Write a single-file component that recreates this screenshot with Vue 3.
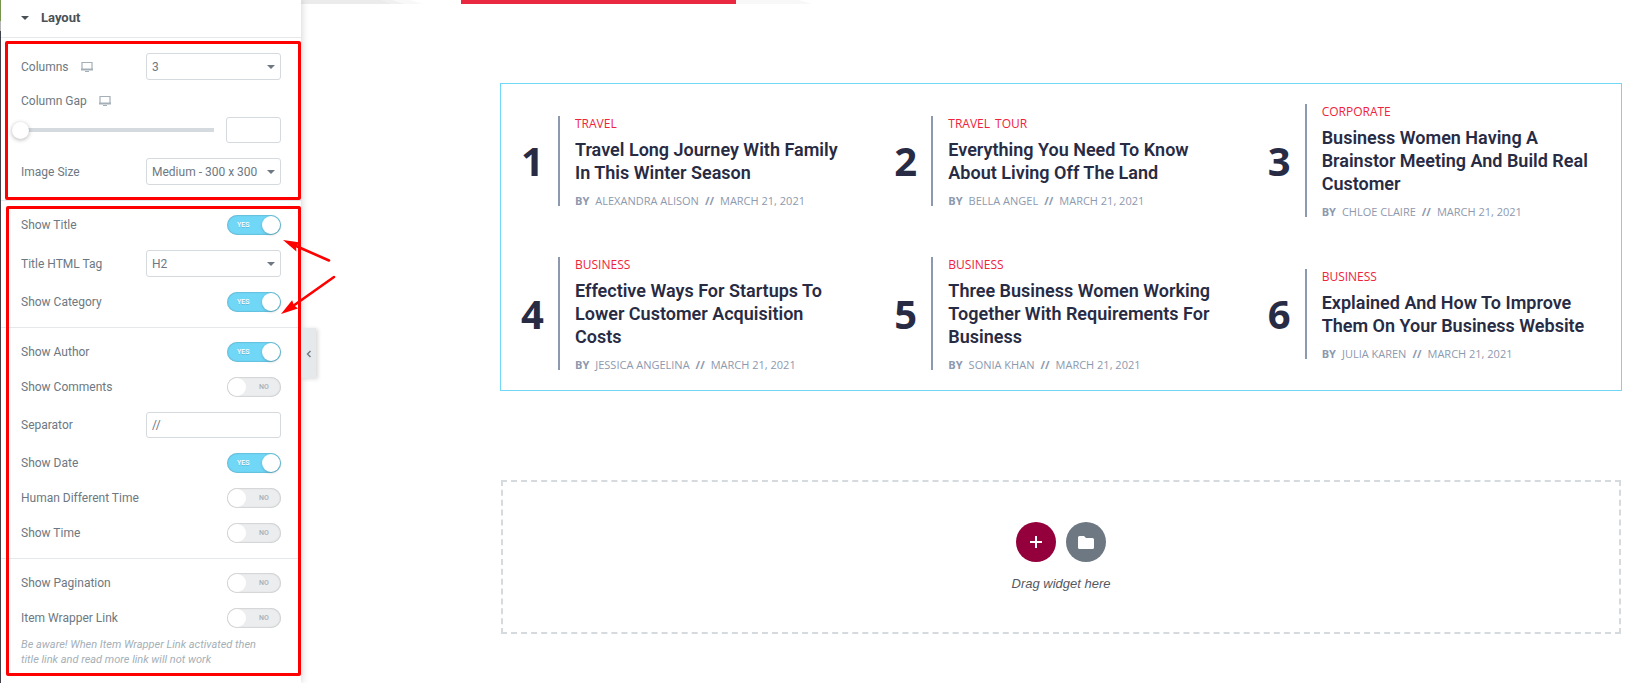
<script setup>
import { ref } from 'vue'

const columns = ref("3")
const columnGap = ref(0)
const gapValue = ref("")
const imageSize = ref("Medium - 300 x 300")

// rows of the panel below the image size, split by the divider lines
const groups = ref([
  [
    { id: "show-title", label: "Show Title", type: "switch", value: true },
    { id: "title-tag", label: "Title HTML Tag", type: "select", value: "H2", options: ["H1", "H2", "H3", "H4", "H5", "H6"] },
    { id: "show-category", label: "Show Category", type: "switch", value: true }
  ],
  [
    { id: "show-author", label: "Show Author", type: "switch", value: true },
    { id: "show-comments", label: "Show Comments", type: "switch", value: false },
    { id: "separator", label: "Separator", type: "text", value: "//" },
    { id: "show-date", label: "Show Date", type: "switch", value: true },
    { id: "human-time", label: "Human Different Time", type: "switch", value: false },
    { id: "show-time", label: "Show Time", type: "switch", value: false }
  ],
  [
    { id: "show-pagination", label: "Show Pagination", type: "switch", value: false },
    { id: "wrapper-link", label: "Item Wrapper Link", type: "switch", value: false }
  ]
])

const posts = [
  { categories: ["Travel"], title: "Travel Long Journey With Family In This Winter Season", author: "Alexandra Alison" },
  { categories: ["Travel", "Tour"], title: "Everything You Need To Know About Living Off The Land", author: "Bella Angel" },
  { categories: ["Corporate"], title: "Business Women Having A Brainstor Meeting And Build Real Customer", author: "Chloe Claire" },
  { categories: ["Business"], title: "Effective Ways For Startups To Lower Customer Acquisition Costs", author: "Jessica Angelina" },
  { categories: ["Business"], title: "Three Business Women Working Together With Requirements For Business", author: "Sonia Khan" },
  { categories: ["Business"], title: "Explained And How To Improve Them On Your Business Website", author: "Julia Karen" }
]
</script>

<template>
  <div class="editor">
    <aside class="panel">
      <button class="heading" type="button">
        <span class="caret"></span>
        Layout
      </button>

      <section class="group first">
        <div class="row">
          <label for="columns">Columns</label>
          <svg class="device" width="12" height="10" viewBox="0 0 12 10">
            <path d="M1 .5h10v7H1z" fill="none" stroke="#a4afb7" stroke-width="1.2" />
            <path d="M0 6.500h12v2H0zM4 9h4v1H4z" fill="#a4afb7" />
          </svg>
          <span class="select">
            <select id="columns" v-model="columns">
              <option v-for="n in 6" :key="n" :value="String(n)">{{ n }}</option>
            </select>
          </span>
        </div>

        <div class="gap-control">
          <div class="gap-label">
            <label for="gap">Column Gap</label>
            <svg class="device" width="12" height="10" viewBox="0 0 12 10">
              <path d="M1 .5h10v7H1z" fill="none" stroke="#a4afb7" stroke-width="1.2" />
              <path d="M0 6.500h12v2H0zM4 9h4v1H4z" fill="#a4afb7" />
            </svg>
          </div>
          <div class="gap-row">
            <input id="gap" v-model="columnGap" class="slider" type="range" min="0" max="100">
            <input v-model="gapValue" class="box small" type="text" aria-label="Column gap value">
          </div>
        </div>

        <div class="row">
          <label for="image-size">Image Size</label>
          <span class="select">
            <select id="image-size" v-model="imageSize">
              <option>Medium - 300 x 300</option>
              <option>Large</option>
              <option>Full</option>
            </select>
          </span>
        </div>
      </section>

      <section class="group" v-for="(group, i) in groups" :key="i">
        <div class="row" v-for="item in group" :key="item.id">
          <label :for="item.id">{{ item.label }}</label>
          <span v-if="item.type === 'switch'" class="switch" :class="{ on: item.value }">
            <input :id="item.id" v-model="item.value" type="checkbox">
            <span class="state">{{ item.value ? 'YES' : 'NO' }}</span>
          </span>
          <span v-else-if="item.type === 'select'" class="select">
            <select :id="item.id" v-model="item.value">
              <option v-for="o in item.options" :key="o">{{ o }}</option>
            </select>
          </span>
          <input v-else :id="item.id" v-model="item.value" class="box" type="text">
        </div>
        <p v-if="i === groups.length - 1" class="note">
          Be aware! When Item Wrapper Link activated then title link and read more link will not work
        </p>
      </section>

      <button class="collapse" type="button" aria-label="Hide panel">
        <svg width="6" height="8" viewBox="0 0 6 8">
          <path d="M4.5 1L1.5 4l3 3" fill="none" stroke="#6d7882" stroke-width="1.4" />
        </svg>
      </button>

      <div class="mark mark-top"></div>
      <div class="mark mark-bottom"></div>
      <svg class="arrows" width="60" height="84" viewBox="280 236 60 84">
        <path d="M329 260.500L296 246M334 277L293 306" stroke="#fe0000" stroke-width="2.6" stroke-linecap="round" />
        <path d="M283 240l17.6 2.5-4.6 3.5.4 5.500zM281 314l11.100-13.800 1.900 5 3.900 3.200z" fill="#fe0000" />
      </svg>
    </aside>

    <main class="preview">
      <svg class="shape" width="512" height="4" viewBox="0 0 512 4">
        <path d="M0 0h109l12 4H0z" fill="#f8f8f8" />
        <path d="M0 0h81l10 4H0z" fill="#ebebeb" />
        <path d="M81 0h10l12 4H91z" fill="#f0f0f0" />
        <path d="M160 0h275v4H160z" fill="#e8293f" />
        <path d="M435 0h63l13 4h-76z" fill="#f8f8f8" />
      </svg>

      <div class="posts">
        <article class="post" v-for="(post, i) in posts" :key="post.title">
          <span class="number">{{ i + 1 }}</span>
          <div class="content">
            <div class="categories">
              <a v-for="category in post.categories" :key="category" href="#">{{ category }}</a>
            </div>
            <h2><a href="#">{{ post.title }}</a></h2>
            <div class="meta">
              <b>By</b>
              <a href="#">{{ post.author }}</a>
              <b>//</b>
              <span>March 21, 2021</span>
            </div>
          </div>
        </article>
      </div>

      <div class="dropzone">
        <div class="actions">
          <button class="add" type="button" aria-label="Add new section">
            <svg width="12" height="12" viewBox="0 0 12 12">
              <path d="M6 0v12M0 6h12" stroke="#fff" stroke-width="2" />
            </svg>
          </button>
          <button class="folder" type="button" aria-label="Add template">
            <svg width="16" height="13" viewBox="0 0 16 13">
              <path d="M1.500 0h4.500l2 2h6.500A1.500 1.500 0 0 1 16 3.500v8a1.500 1.500 0 0 1-1.500 1.500h-13A1.500 1.500 0 0 1 0 11.500v-10A1.500 1.500 0 0 1 1.500 0z" fill="#fff" />
            </svg>
          </button>
        </div>
        <p>Drag widget here</p>
      </div>
    </main>
  </div>
</template>

<style>
body {
  margin: 0;
  background: #fff;
}
</style>

<style scoped>
* {
  box-sizing: border-box;
}

.editor {
  display: flex;
  min-height: 100vh;
  font-family: Roboto, sans-serif;
}

button {
  border: none;
  padding: 0;
  cursor: pointer;
}

a {
  color: inherit;
  text-decoration: none;
}

/* panel */
.panel {
  position: relative;
  flex: none;
  width: 301px;
  border-left: 1px solid;
  border-image: linear-gradient(#76954a 22px, #b5b5b5 22px 32px, #404349 32px) 1;
  background: #fff;
  color: #6d7882;
  font-size: 12px;
  box-shadow: 0 0 8px rgba(0, 0, 0, 0.2);
}

.heading {
  display: flex;
  align-items: center;
  gap: 12px;
  width: 100%;
  height: 38px;
  padding: 0 20px 2px;
  border-bottom: 1px solid #e6e9ec;
  background: #fff;
  color: #495157;
  font: bold 13px Roboto, sans-serif;
}

.caret {
  border: 4px solid transparent;
  border-top-color: #495157;
  border-bottom: none;
}

.group {
  display: flex;
  flex-direction: column;
  gap: 15px;
  padding: 14px 20px 15px;
  border-top: 1px solid #e6e9ec;
}

.group.first {
  padding-top: 15px;
  border-top: none;
}

.group:last-of-type {
  padding-bottom: 0;
}

.row {
  display: flex;
  align-items: center;
}

.row label {
  white-space: nowrap;
}

.device {
  margin-left: 12px;
}

.select,
.switch,
.row .box {
  margin-left: auto;
}

.select {
  position: relative;
  width: 135px;
}

.select::after {
  content: "";
  position: absolute;
  top: 12px;
  right: 6px;
  border: 4px solid transparent;
  border-top-color: #6d7882;
  border-bottom: none;
  pointer-events: none;
}

select,
.box {
  display: block;
  width: 135px;
  height: 27px;
  padding: 0 5px;
  border: 1px solid #d5dadf;
  border-radius: 3px;
  background: #fff;
  color: #6d7882;
  font: 12px Roboto, sans-serif;
  appearance: none;
}

.box {
  height: 26px;
}

.box.small {
  width: 55px;
}

.gap-label {
  display: flex;
  align-items: center;
  height: 12px;
  margin-bottom: 10px;
}

.gap-row {
  display: flex;
  align-items: center;
  justify-content: space-between;
}

.slider {
  width: 202px;
  height: 17px;
  margin: 0 0 0 -9px;
  background: linear-gradient(#d5dadf, #d5dadf) 9px center / 193px 4px no-repeat;
  appearance: none;
}

.slider::-webkit-slider-thumb {
  width: 17px;
  height: 17px;
  border-radius: 50%;
  background: #fff;
  box-shadow: 0 1px 4px rgba(0, 0, 0, 0.3);
  appearance: none;
}

.switch {
  display: grid;
  width: 54px;
  height: 20px;
}

.switch > * {
  grid-area: 1 / 1;
}

.switch input {
  width: 54px;
  height: 20px;
  margin: 0;
  border-radius: 10px;
  background: #ebedef;
  box-shadow: inset 0 0 2px rgba(0, 0, 0, 0.35);
  appearance: none;
}

.switch input::before {
  content: "";
  display: block;
  width: 18px;
  height: 18px;
  margin: 1px;
  border-radius: 50%;
  background: #fff;
}

.switch.on input {
  background: #71d7f7;
}

.switch.on input::before {
  margin-left: 35px;
  box-shadow: 0 1px 3px rgba(0, 0, 0, 0.2);
}

.state {
  padding-left: 32px;
  color: #a4afb7;
  font-size: 7px;
  font-weight: 500;
  line-height: 20px;
  pointer-events: none;
}

.on .state {
  padding-left: 10px;
  color: #fff;
  text-shadow: 0 1px 0 rgba(0, 0, 0, 0.15);
}

.note {
  margin: -6px 0 0;
  padding-right: 12px;
  color: #a4afb7;
  font-size: 11px;
  font-style: italic;
  line-height: 15px;
}

.collapse {
  position: absolute;
  top: 328px;
  left: 100%;
  width: 15px;
  height: 50px;
  background: #e6e9ec;
  box-shadow: 2px 1px 4px rgba(0, 0, 0, 0.15);
}

/* red outlines and arrows over the controls */
.mark {
  position: absolute;
  right: 0;
  border: 3px solid #fe0000;
  border-radius: 2px;
  pointer-events: none;
}

.mark-top {
  top: 41px;
  left: 4px;
  height: 159px;
}

.mark-bottom {
  top: 206px;
  left: 5px;
  height: 470px;
}

.arrows {
  position: absolute;
  top: 236px;
  left: 279px;
  pointer-events: none;
}

/* preview */
.preview {
  flex: 1;
  min-width: 0;
  padding-right: 7px;
}

.shape {
  display: block;
}

.posts {
  display: grid;
  grid-template-columns: repeat(3, 1fr);
  margin: 79px 0 0 199px;
  border: 1px solid #71d7f7;
}

.post {
  display: flex;
  align-items: center;
  padding: 20px;
}

.number {
  flex: none;
  width: 37px;
  color: #282b44;
  font: bold 40px "Open Sans", sans-serif;
  line-height: 40px;
}

.content {
  border-left: 2px solid #8d99ae;
  padding-left: 15px;
  font-family: "Open Sans", sans-serif;
}

.categories {
  display: flex;
  gap: 5px;
  color: #ef233c;
  font-size: 12px;
  line-height: 16px;
  text-transform: uppercase;
}

h2 {
  margin: 6px 0 11px;
  color: #282b44;
  font: 600 18px Roboto, sans-serif;
  line-height: 23px;
}

.meta {
  display: flex;
  gap: 6px;
  color: #8d99ae;
  font-size: 11px;
  line-height: 11px;
  text-transform: uppercase;
}

.dropzone {
  margin: 89px 1px 0 200px;
  padding: 40px 0;
  border: 2px dashed #d5dadf;
  text-align: center;
}

.actions {
  display: flex;
  justify-content: center;
  gap: 10px;
}

.actions button {
  display: grid;
  place-items: center;
  width: 40px;
  height: 40px;
  border-radius: 50%;
}

.add {
  background: #93003c;
}

.folder {
  background: #6d7882;
}

.dropzone p {
  margin: 13px 0 0;
  color: #54595f;
  font: italic 13px "Liberation Sans", sans-serif;
  line-height: 17px;
}
</style>
